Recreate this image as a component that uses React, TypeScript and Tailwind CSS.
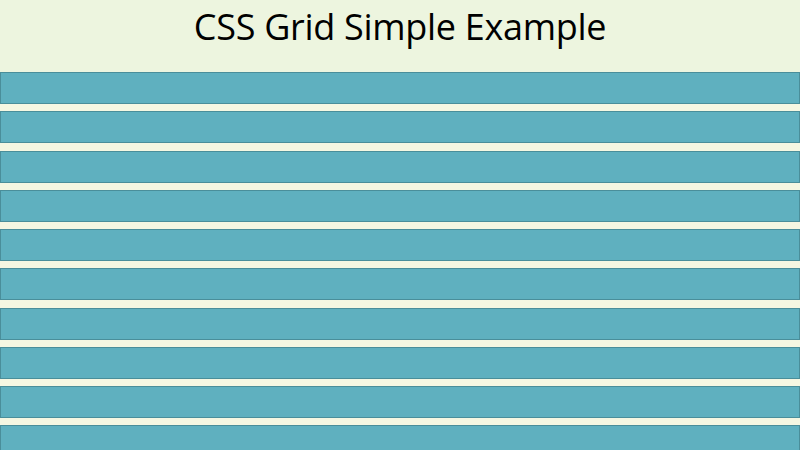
export default function App() {
  const rows = Array.from({ length: 10 }, (_, i) => i);
  return (
    <div className="h-[450px] w-[800px] overflow-hidden bg-[#f5f7e2] font-['Open_Sans',sans-serif]">
      <header className="h-[72px] bg-[#edf5df] flex justify-center">
        <h1 className="text-[36px] leading-[54px] text-black tracking-[-0.3px]">CSS Grid Simple Example</h1>
      </header>
      {/* simple one-column grid */}
      <div className="grid grid-cols-1 auto-rows-[32px] gap-[7.25px]">
        {rows.map((i) => (
          <div key={i} className="bg-[#5fb0bf] border border-[#4a8e9a]"></div>
        ))}
      </div>
    </div>
  );
}
